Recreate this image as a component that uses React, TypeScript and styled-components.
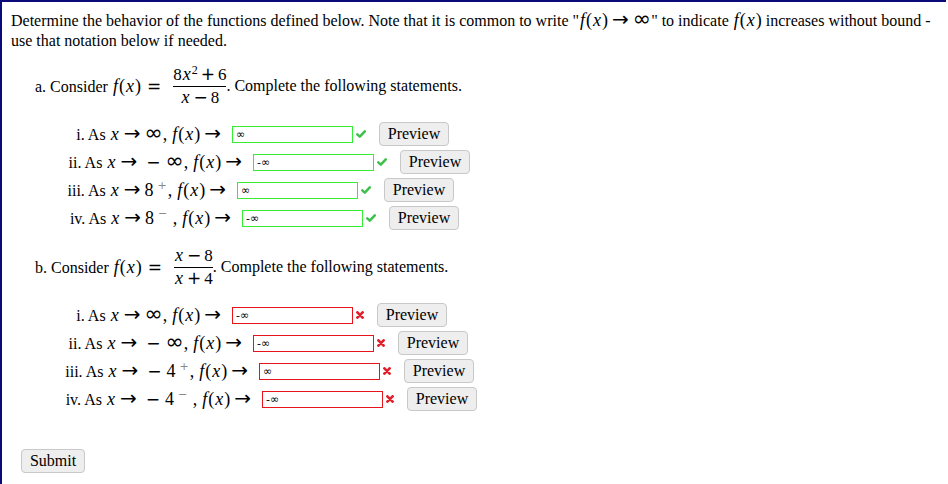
import React from "react";
import styled, { createGlobalStyle } from "styled-components";

const GlobalStyle = createGlobalStyle`
  html, body {
    margin: 0;
    padding: 0;
    background: #fff;
  }
  body {
    font-family: "Liberation Serif", "Times New Roman", serif;
    font-size: 16px;
    color: #000;
  }
`;

const Page = styled.div`
  box-sizing: border-box;
  width: 946px;
  min-height: 484px;
  border-top: 2px solid #0a0a7a;
  border-left: 2px solid #0a0a7a;
  padding: 8px 0 0 9px;
`;

const Intro = styled.p`
  margin: 0;
  height: 40px;
  line-height: 20px;
  white-space: nowrap;
`;

const Part = styled.div`
  margin-top: ${(p: { top: number }) => p.top}px;
`;

const Heading = styled.div`
  display: flex;
  align-items: center;
  height: 40px;
  padding-left: 24px;
`;

const Frac = styled.span`
  display: inline-flex;
  flex-direction: column;
  align-items: center;
  margin: 0 0 0 6px;
  font-family: "Liberation Serif", serif;
  font-size: 17px;
  line-height: 19px;
`;

const FracBar = styled.span`
  align-self: stretch;
  border-top: 1px solid #000;
  margin: 2px 0 1px;
`;

const MathI = styled.span`
  font-family: "Liberation Serif", serif;
  font-style: italic;
  font-size: 18px;
  padding: 0 1px;
`;

const MathR = styled.span`
  font-family: "Liberation Serif", serif;
  font-size: 18px;
`;

interface OpProps {
  gap?: number;
  size?: number;
}
const Op = styled.span<OpProps>`
  display: inline-block;
  font-family: "DejaVu Sans", sans-serif;
  font-size: ${(p) => p.size ?? 17}px;
  line-height: 16px;
  margin: 0 ${(p) => p.gap ?? 4}px;
`;

const Inf = styled.span`
  font-family: "DejaVu Sans", sans-serif;
  font-size: 22px;
  line-height: 16px;
`;

const Sup = styled.span`
  display: inline-block;
  font-family: "DejaVu Sans", sans-serif;
  font-size: 11px;
  line-height: 12px;
  color: #888;
  transform: translateY(-7px);
  margin: 0 1px 0 4px;
`;

const Square = styled.span`
  display: inline-block;
  font-family: "Liberation Serif", serif;
  font-size: 12px;
  line-height: 12px;
  transform: translateY(-6px);
`;

const Rows = styled.div`
  margin-top: 14px;
`;

interface RowProps {
  indent: number;
}
const Row = styled.div<RowProps>`
  display: flex;
  align-items: center;
  height: 28px;
  padding-left: ${(p) => p.indent - 11}px;
`;

interface LabelProps {
  width: number;
}
const Label = styled.span<LabelProps>`
  display: inline-flex;
  justify-content: flex-end;
  flex: none;
  width: ${(p) => p.width}px;
  box-sizing: border-box;
  padding-right: 7px;
`;

const LabelText = styled.span`
  white-space: pre;
`;

interface AnswerProps {
  ok: boolean;
}
const Answer = styled.input<AnswerProps>`
  box-sizing: border-box;
  flex: none;
  width: 121px;
  height: 17px;
  margin: 0;
  padding: 0 3px;
  border: 1px solid ${(p) => (p.ok ? "#33ee33" : "#e8141c")};
  font-family: "DejaVu Sans", sans-serif;
  font-size: 11px;
  color: #000;
  outline: none;
  background: #fff;
`;

const Mark = styled.span<AnswerProps>`
  display: inline-flex;
  align-items: center;
  flex: none;
  width: ${(p) => (p.ok ? 26 : 24)}px;
  padding-left: 3px;
  box-sizing: border-box;
`;

const Button = styled.button`
  box-sizing: border-box;
  height: 24px;
  padding: 0 7px;
  border: 1px solid #c8c8c8;
  border-radius: 4px;
  background: #eeeeee;
  font-family: "Liberation Serif", "Times New Roman", serif;
  font-size: 16px;
  color: #000;
`;

const PreviewButton = styled(Button)`
  width: 70px;
`;

const SubmitButton = styled(Button)`
  width: 64px;
  margin: 36px 0 0 10px;
`;

const Check = () => (
  <svg width="10" height="8" viewBox="0 0 10 8">
    <path
      d="M1.3 4.3 L3.8 6.6 L8.8 1.4"
      fill="none"
      stroke="#3cc04a"
      strokeWidth="2.5"
      strokeLinejoin="round"
      strokeLinecap="round"
    />
  </svg>
);

const Cross = () => (
  <svg width="8" height="8" viewBox="0 0 8 8">
    <path
      d="M1.4 1.4 L6.6 6.6 M6.6 1.4 L1.4 6.6"
      fill="none"
      stroke="#e0202a"
      strokeWidth="2.7"
      strokeLinecap="round"
    />
  </svg>
);

const Arrow = () => (
  <Op gap={4} size={20}>
    →
  </Op>
);
const Minus = () => <Op gap={5}>−</Op>;
const X = () => <MathI>x</MathI>;
const Fx = () => (
  <MathR>
    <MathI>f</MathI>(<MathI>x</MathI>)
  </MathR>
);

interface RowData {
  num: string;
  indent: number;
  inputX: number;
  target: React.ReactNode;
  value: string;
}

const partA: RowData[] = [
  { num: "i.", indent: 78, inputX: 232, target: <><Inf>∞</Inf>,</>, value: "∞" },
  { num: "ii.", indent: 75, inputX: 253, target: <><Minus /><Inf>∞</Inf>,</>, value: "-∞" },
  { num: "iii.", indent: 69, inputX: 237, target: <>8<Sup>+</Sup>,</>, value: "∞" },
  { num: "iv.", indent: 71, inputX: 242, target: <>8<Sup>−</Sup> ,</>, value: "-∞" },
];

const partB: RowData[] = [
  { num: "i.", indent: 78, inputX: 232, target: <><Inf>∞</Inf>,</>, value: "-∞" },
  { num: "ii.", indent: 75, inputX: 253, target: <><Minus /><Inf>∞</Inf>,</>, value: "-∞" },
  { num: "iii.", indent: 69, inputX: 259, target: <><Minus />4<Sup>+</Sup>,</>, value: "∞" },
  { num: "iv.", indent: 71, inputX: 262, target: <><Minus />4<Sup>−</Sup> ,</>, value: "-∞" },
];

const StatementRows = ({ rows, ok }: { rows: RowData[]; ok: boolean }) => (
  <Rows>
    {rows.map((r) => (
      <Row key={r.num} indent={r.indent}>
        <Label width={r.inputX - r.indent}>
          <LabelText>
            {r.num} As <X />
            <Arrow />
            <MathR>{r.target}</MathR> <Fx />
            <Arrow />
          </LabelText>
        </Label>
        <Answer ok={ok} type="text" defaultValue={r.value} />
        <Mark ok={ok}>{ok ? <Check /> : <Cross />}</Mark>
        <PreviewButton type="button">Preview</PreviewButton>
      </Row>
    ))}
  </Rows>
);

const HeadText = styled.span`
  white-space: pre;
`;

export default function App() {
  return (
    <Page>
      <GlobalStyle />
      <Intro>
        Determine the behavior of the functions defined below. Note that it is
        common to write "<Fx />
        <Arrow />
        <Inf>∞</Inf>" to indicate <Fx /> increases without bound -
        <br />
        use that notation below if needed.
      </Intro>

      <Part top={16}>
        <Heading>
          <HeadText>
            a. Consider <Fx />
            <Op gap={6}>=</Op>
          </HeadText>
          <Frac>
            <span>
              8<MathI>x</MathI>
              <Square>2</Square>
              <Op gap={3}>+</Op>6
            </span>
            <FracBar />
            <span>
              <MathI>x</MathI>
              <Op gap={3}>−</Op>8
            </span>
          </Frac>
          <HeadText>. Complete the following statements.</HeadText>
        </Heading>
        <StatementRows rows={partA} ok />
      </Part>

      <Part top={15}>
        <Heading>
          <HeadText>
            b. Consider <Fx />
            <Op gap={6}>=</Op>
          </HeadText>
          <Frac>
            <span>
              <MathI>x</MathI>
              <Op gap={3}>−</Op>8
            </span>
            <FracBar />
            <span>
              <MathI>x</MathI>
              <Op gap={3}>+</Op>4
            </span>
          </Frac>
          <HeadText>. Complete the following statements.</HeadText>
        </Heading>
        <StatementRows rows={partB} ok={false} />
      </Part>

      <SubmitButton type="button">Submit</SubmitButton>
    </Page>
  );
}
